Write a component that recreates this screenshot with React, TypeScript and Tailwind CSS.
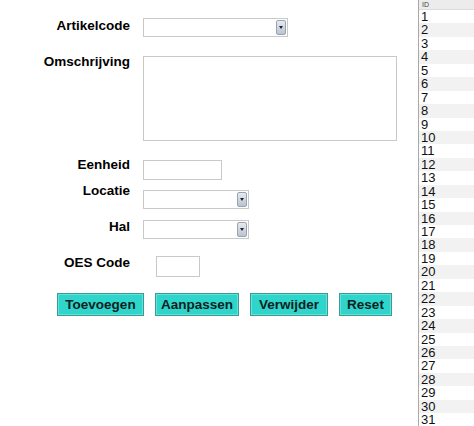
import React from 'react';

const labelCls = 'w-[130px] shrink-0 text-right text-[13.5px] leading-[16px] font-bold text-black';

const Select = ({ width }: { width: string }) => (
	<div className={`${width} h-[19px] flex items-stretch border border-[#c9c9c9] bg-white`}>
		<div className="flex-1" />
		<div className="w-[10px] my-[1px] mr-[1px] rounded-[2px] border border-[#9aa3b0] bg-gradient-to-b from-[#e6ebf2] to-[#b9c3d1] flex items-center justify-center">
			<div className="w-0 h-0 border-l-[2px] border-r-[2px] border-t-[3px] border-l-transparent border-r-transparent border-t-[#222]" />
		</div>
	</div>
);

const buttons = [
	{ label: 'Toevoegen', w: 'w-[87px]' },
	{ label: 'Aanpassen', w: 'w-[84px]' },
	{ label: 'Verwijder', w: 'w-[78px]' },
	{ label: 'Reset', w: 'w-[53px]' },
];

export default function App() {
	const ids = Array.from({ length: 31 }, (_, i) => i + 1);

	return (
		<div className="w-[474px] h-[426px] overflow-hidden bg-white flex" style={{ fontFamily: '"Liberation Sans", Arial, sans-serif' }}>
			{/* Form */}
			<div className="flex-1 flex flex-col pt-[18px]">
				<div className="flex items-start gap-[13px]">
					<span className={labelCls}>Artikelcode</span>
					<Select width="w-[145px]" />
				</div>

				<div className="flex items-start gap-[13px] mt-[19px]">
					<span className={`${labelCls} -mt-[2px]`}>Omschrijving</span>
					<div className="w-[254px] h-[85px] border border-[#c9c9c9] bg-white" />
				</div>

				<div className="flex items-start gap-[13px] mt-[19px]">
					<span className={`${labelCls} -mt-[3px]`}>Eenheid</span>
					<div className="w-[79px] h-[20px] border border-[#c9c9c9] bg-white" />
				</div>

				<div className="flex items-start gap-[13px] mt-[10px]">
					<span className={`${labelCls} -mt-[7px]`}>Locatie</span>
					<Select width="w-[106px]" />
				</div>

				<div className="flex items-start gap-[13px] mt-[11px]">
					<span className={`${labelCls} -mt-[1px]`}>Hal</span>
					<Select width="w-[106px]" />
				</div>

				<div className="flex items-start gap-[26px] mt-[17px]">
					<span className={`${labelCls} -mt-[1px]`}>OES Code</span>
					<div className="w-[44px] h-[21px] border border-[#c9c9c9] bg-white" />
				</div>

				<div className="flex gap-[11px] mt-[16px] pl-[57px]">
					{buttons.map((b) => (
						<button
							key={b.label}
							className={`${b.w} h-[23px] border border-[#3c9a94] bg-[#2fd4ca] shadow-[inset_0_0_0_1px_#5fe3da] text-[13.5px] leading-[16px] font-bold text-[#0b1f1f] flex items-center justify-center`}
						>
							{b.label}
						</button>
					))}
				</div>
			</div>

			{/* ID list */}
			<div className="w-[56px] h-full border-l border-[#a8a8a8] flex flex-col">
				<div className="h-[10px] shrink-0 bg-[#ececec] border-b border-[#dcdcdc] text-[7px] leading-[9px] text-[#444] pl-[3px]">ID</div>
				{ids.map((id) => (
					<div
						key={id}
						className={`h-[13.45px] shrink-0 pl-[2px] text-[13px] leading-[13.45px] text-[#111] ${id % 2 === 0 ? 'bg-[#f2f2f2]' : 'bg-white'}`}
					>
						{id}
					</div>
				))}
			</div>
		</div>
	);
}
